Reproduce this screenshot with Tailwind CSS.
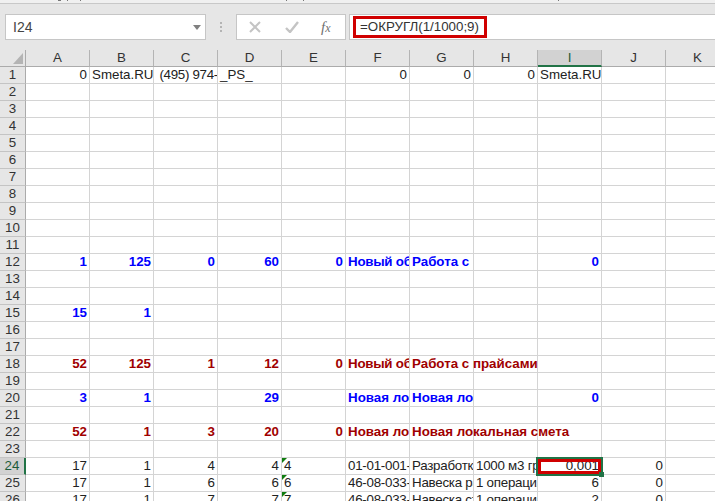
<!DOCTYPE html>
<html lang="ru">
  <head>
    <meta charset="UTF-8" />
    <title>Smeta.RU</title>
    <script src="https://cdn.jsdelivr.net/npm/@tailwindcss/browser@4"></script>
  </head>
  <body class="relative w-[715px] h-[501px] overflow-hidden bg-white font-['Liberation_Sans',Arial,sans-serif] text-[#222]">
    <!-- formula bar -->
    <div class="h-[50px] bg-[#e6e6e6]">
      <div class="relative h-[4px] border-b border-[#c8c8c8] bg-[#f0f0f0]">
        <!-- bottoms of the ribbon labels cut off by the crop -->
        <i class="absolute left-[58px] top-0 w-[3px] h-[1px] bg-[#777]"></i>
        <i class="absolute left-[67px] top-0 w-[1px] h-[1px] bg-[#777]"></i>
        <i class="absolute left-[80px] top-0 w-[1px] h-[1px] bg-[#777]"></i>
        <i class="absolute left-[286px] top-0 w-[1px] h-[1px] bg-[#777]"></i>
        <i class="absolute left-[303px] top-0 w-[1px] h-[1px] bg-[#777]"></i>
        <i class="absolute left-[558px] top-0 w-[1px] h-[1px] bg-[#777]"></i>
      </div>
      <div class="flex pt-[10px]">
        <div class="ml-[5px] w-[201px] h-[26px] bg-white border border-[#c6c6c6] flex items-center justify-between pl-[7px] pr-[4px] text-[14px] text-[#444]">
          <span>I24</span>
          <svg class="w-[8px] h-[5px]" viewBox="0 0 8 5"><path d="M0 0h8L4 5z" fill="#808080" /></svg>
        </div>
        <div class="w-[30px] flex flex-col items-center justify-center gap-[2px]">
          <i class="w-[2px] h-[2px] bg-[#b4b4b4]"></i>
          <i class="w-[2px] h-[2px] bg-[#b4b4b4]"></i>
          <i class="w-[2px] h-[2px] bg-[#b4b4b4]"></i>
        </div>
        <div class="w-[110px] h-[26px] bg-white border border-[#c6c6c6] flex items-center pl-[12px]">
          <svg class="w-[12px] h-[12px]" viewBox="0 0 12 12"><path d="M1 1l10 10M11 1L1 11" stroke="#c4c4c4" stroke-width="2" fill="none" /></svg>
          <svg class="ml-[24px] w-[14px] h-[12px]" viewBox="0 0 14 12"><path d="M1 7l4 4 8-10" stroke="#c4c4c4" stroke-width="2.4" fill="none" /></svg>
          <span class="ml-[22px] text-[15px] italic font-['Liberation_Serif',serif] text-[#707070]">f<span class="text-[12px]">x</span></span>
        </div>
        <div class="ml-[3px] flex-1 h-[26px] bg-white border-y border-l border-[#c6c6c6] pl-[3px] pt-[1px]">
          <div class="w-[134px] h-[22px] border-[3px] border-[#d00000] flex items-center pl-[4px] text-[13.33px] text-[#333] whitespace-nowrap">=ОКРУГЛ(1/1000;9)</div>
        </div>
      </div>
    </div>

    <div id="sheet" class="grid grid-cols-[26px_repeat(11,64px)] auto-rows-[17px] w-[715px] text-[13.33px] leading-[16px]"></div>

    <script>
      const base = "relative overflow-hidden whitespace-nowrap border-r border-b border-[#d4d4d4]";
      const blue = "font-bold text-[#0000ff]";
      const red = "font-bold text-[#a00000]";
      const tight = "tracking-[-0.25px]";
      const cols = "ABCDEFGHIJK".split("");

      // [column, text, colour, spills over empty neighbours, selected]; numbers go right
      const rows = {
        1: [["A", 0], ["B", "Smeta.RU"], ["C", "&nbsp;(495) 974-", "tracking-[-0.3px]"], ["D", "_PS_"], ["F", 0], ["G", 0], ["H", 0], ["I", "Smeta.RU"]],
        12: [["A", 1, blue], ["B", 125, blue], ["C", 0, blue], ["D", 60, blue], ["E", 0, blue], ["F", "Новый объект", `${blue} ${tight}`], ["G", "Работа с прайсами", blue], ["I", 0, blue]],
        15: [["A", 15, blue], ["B", 1, blue]],
        18: [["A", 52, red], ["B", 125, red], ["C", 1, red], ["D", 12, red], ["E", 0, red], ["F", "Новый объект", `${red} ${tight}`], ["G", "Работа с прайсами", red, true]],
        20: [["A", 3, blue], ["B", 1, blue], ["D", 29, blue], ["F", "Новая локальная смета", blue], ["G", "Новая локальная смета", blue], ["I", 0, blue]],
        22: [["A", 52, red], ["B", 1, red], ["C", 3, red], ["D", 20, red], ["E", 0, red], ["F", "Новая локальная смета", red], ["G", "Новая локальная смета", red, true]],
        24: [["A", 17], ["B", 1], ["C", 4], ["D", 4], ["E", "4"], ["F", "01-01-001-1", tight], ["G", "Разработка", tight], ["H", "1000 м3 грунта", tight], ["I", "0,001", "", false, true], ["J", 0]],
        25: [["A", 17], ["B", 1], ["C", 6], ["D", 6], ["E", "6"], ["F", "46-08-033-1", tight], ["G", "Навеска разм", tight], ["H", "1 операция", tight], ["I", 6], ["J", 0]],
        26: [["A", 17], ["B", 1], ["C", 7], ["D", 7], ["E", "7"], ["F", "46-08-033-2", tight], ["G", "Навеска стен", tight], ["H", "1 операция", tight], ["I", 2], ["J", 0]],
      };

      let html = '<div class="bg-[#e6e6e6] border-r border-b border-[#ababab] relative"><svg class="absolute left-[13px] top-[3px] w-[10px] h-[11px]" viewBox="0 0 10 11"><path d="M10 0v11H0z" fill="#b4b4b4" /></svg></div>';
      for (const c of cols) {
        const on = c === "I";
        html += `<div class="flex items-center justify-center h-[17px] ${on ? "bg-[#d2d2d2] border-b-2 border-[#217346] text-[#1d5c3a]" : "bg-[#e6e6e6] border-b border-[#ababab] text-[#333]"} border-r border-r-[#b4b4b4]">${c}</div>`;
      }
      for (let r = 1; r <= 26; r++) {
        const on = r === 24;
        html += `<div class="flex items-center justify-center ${on ? "bg-[#d2d2d2] border-r-2 border-r-[#217346] text-[#1d5c3a]" : "bg-[#e6e6e6] border-r border-r-[#ababab] text-[#333]"} border-b border-b-[#c4c4c4]">${r}</div>`;
        const data = rows[r] || [];
        for (const c of cols) {
          const cell = data.find((d) => d[0] === c);
          if (!cell) {
            html += `<div class="${base}"></div>`;
            continue;
          }
          const [, val, colour = "", spill = false, picked = false] = cell;
          const num = typeof val === "number" || picked;
          const align = num ? "text-right pr-[2px]" : "pl-[2px]";
          const over = spill ? "overflow-visible z-10" : "";
          html += `<div class="${base} ${align} ${colour} ${over}">${val}`;
          if (c === "E" && r >= 24) html += '<span class="absolute left-0 top-0 w-0 h-0 border-t-[5px] border-r-[5px] border-t-[#107c10] border-r-transparent"></span>';
          html += "</div>";
        }
      }
      document.getElementById("sheet").innerHTML = html;
    </script>

    <!-- selected cell I24 with the red marker over it -->
    <div class="absolute left-[536px] top-[457px] w-[67px] h-[19px] border-[2px] border-[#217346] pointer-events-none">
      <div class="w-full h-full border-[3px] border-[#d00000]"></div>
      <div class="absolute right-[-3px] bottom-[-3px] w-[5px] h-[5px] bg-[#217346]"></div>
    </div>
  </body>
</html>
